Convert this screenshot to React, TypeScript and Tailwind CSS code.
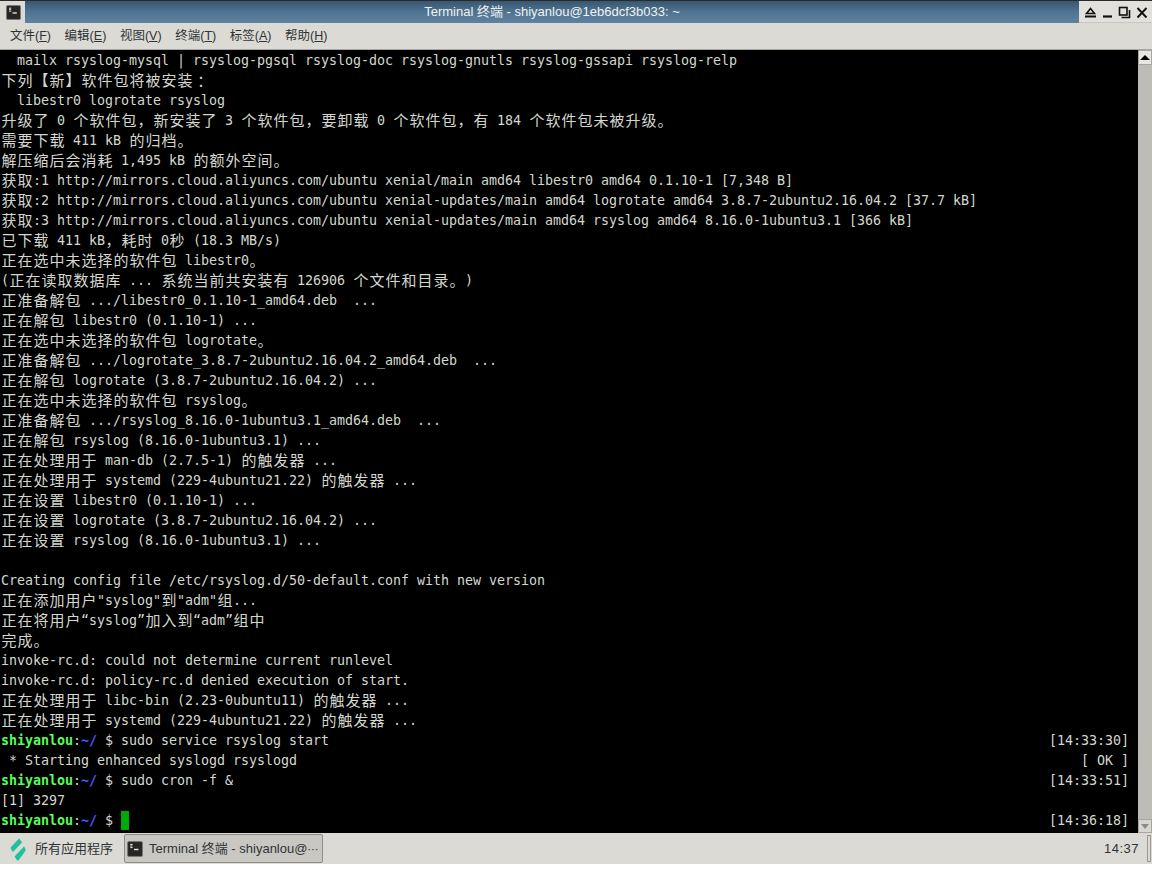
const MONO = "font-['DejaVu_Sans_Mono','Noto_Sans_CJK_SC',monospace]";

type Seg = { t: string; c?: string };
type Line = { segs: Seg[]; time?: string };

const prompt = (cmd: string, time: string, cursor = false): Line => ({
  segs: [
    { t: "shiyanlou", c: "font-bold text-[#55ff55]" },
    { t: ":" },
    { t: "~/", c: "font-bold text-[#5555ff]" },
    { t: " $ " + cmd },
    ...(cursor ? [{ t: "\u0000" }] : []),
  ],
  time,
});

const plain = (t: string, time?: string): Line => ({ segs: [{ t }], time });

const lines: Line[] = [
  plain("  mailx rsyslog-mysql | rsyslog-pgsql rsyslog-doc rsyslog-gnutls rsyslog-gssapi rsyslog-relp"),
  plain("下列【新】软件包将被安装："),
  plain("  libestr0 logrotate rsyslog"),
  plain("升级了 0 个软件包，新安装了 3 个软件包，要卸载 0 个软件包，有 184 个软件包未被升级。"),
  plain("需要下载 411 kB 的归档。"),
  plain("解压缩后会消耗 1,495 kB 的额外空间。"),
  plain("获取:1 http://mirrors.cloud.aliyuncs.com/ubuntu xenial/main amd64 libestr0 amd64 0.1.10-1 [7,348 B]"),
  plain("获取:2 http://mirrors.cloud.aliyuncs.com/ubuntu xenial-updates/main amd64 logrotate amd64 3.8.7-2ubuntu2.16.04.2 [37.7 kB]"),
  plain("获取:3 http://mirrors.cloud.aliyuncs.com/ubuntu xenial-updates/main amd64 rsyslog amd64 8.16.0-1ubuntu3.1 [366 kB]"),
  plain("已下载 411 kB，耗时 0秒 (18.3 MB/s)"),
  plain("正在选中未选择的软件包 libestr0。"),
  plain("(正在读取数据库 ... 系统当前共安装有 126906 个文件和目录。)"),
  plain("正准备解包 .../libestr0_0.1.10-1_amd64.deb  ..."),
  plain("正在解包 libestr0 (0.1.10-1) ..."),
  plain("正在选中未选择的软件包 logrotate。"),
  plain("正准备解包 .../logrotate_3.8.7-2ubuntu2.16.04.2_amd64.deb  ..."),
  plain("正在解包 logrotate (3.8.7-2ubuntu2.16.04.2) ..."),
  plain("正在选中未选择的软件包 rsyslog。"),
  plain("正准备解包 .../rsyslog_8.16.0-1ubuntu3.1_amd64.deb  ..."),
  plain("正在解包 rsyslog (8.16.0-1ubuntu3.1) ..."),
  plain("正在处理用于 man-db (2.7.5-1) 的触发器 ..."),
  plain("正在处理用于 systemd (229-4ubuntu21.22) 的触发器 ..."),
  plain("正在设置 libestr0 (0.1.10-1) ..."),
  plain("正在设置 logrotate (3.8.7-2ubuntu2.16.04.2) ..."),
  plain("正在设置 rsyslog (8.16.0-1ubuntu3.1) ..."),
  plain(""),
  plain("Creating config file /etc/rsyslog.d/50-default.conf with new version"),
  plain('正在添加用户"syslog"到"adm"组...'),
  plain("正在将用户“syslog”加入到“adm”组中"),
  plain("完成。"),
  plain("invoke-rc.d: could not determine current runlevel"),
  plain("invoke-rc.d: policy-rc.d denied execution of start."),
  plain("正在处理用于 libc-bin (2.23-0ubuntu11) 的触发器 ..."),
  plain("正在处理用于 systemd (229-4ubuntu21.22) 的触发器 ..."),
  prompt("sudo service rsyslog start", "[14:33:30]"),
  plain(" * Starting enhanced syslogd rsyslogd", "[ OK ]"),
  prompt("sudo cron -f &", "[14:33:51]"),
  plain("[1] 3297"),
  prompt("", "[14:36:18]", true),
];

const isWide = (ch: string) => /[\u3000-\u30ff\u3400-\u9fff\uff00-\uffef]/.test(ch);

// every character sits on the terminal's 8px cell grid, CJK takes two cells
const Cells = ({ text, className }: { text: string; className?: string }) => (
  <>
    {Array.from(text).map((ch, i) =>
      ch === "\u0000" ? (
        <span key={i} className="inline-block h-[19px] w-2 bg-[#00aa00] align-top" />
      ) : (
        <span
          key={i}
          className={`inline-block h-5 overflow-visible whitespace-pre text-center align-top ${
            ch === "：" ? "w-4 text-[15px] font-['Noto_Sans_CJK_TC']" : isWide(ch) ? "w-4 text-[15px]" : "w-2"
          } ${className ?? ""}`}
        >
          {ch}
        </span>
      )
    )}
  </>
);

const TermIcon = ({ size }: { size: number }) => (
  <svg width={size} height={size} viewBox="0 0 16 16" className="shrink-0">
    <rect x="0.5" y="0.5" width="15" height="15" rx="1.5" fill="#2e2e2c" stroke="#77777a" />
    <rect x="1.5" y="1.5" width="13" height="13" fill="#262624" />
    <path d="M3.2 3.4h2.4M3.2 5h2.2M3.4 6.6h2.2" stroke="#eeeeec" strokeWidth="1" />
    <path d="M7 8.5h4.5" stroke="#eeeeec" strokeWidth="1.4" />
  </svg>
);

const menus = [
  ["文件", "F"],
  ["编辑", "E"],
  ["视图", "V"],
  ["终端", "T"],
  ["标签", "A"],
  ["帮助", "H"],
];

const UI_FONT = "font-['Liberation_Sans','Noto_Sans_CJK_SC',sans-serif]";

export default function App() {
  return (
    <div className={`flex h-[896px] w-[1152px] flex-col overflow-hidden bg-white ${UI_FONT}`}>
      {/* title bar */}
      <div className="flex h-[23px] shrink-0 border-t border-[#2a2a2a] bg-[#dcdad5]">
        <div className="flex w-[25px] shrink-0 items-center justify-center pl-[1px]">
          <TermIcon size={15} />
        </div>
        <div className="flex flex-1 items-center justify-center bg-gradient-to-b from-[#39566f] via-[#4f7492] to-[#5f829e] text-[13px] text-[#f0f3f5]">
          Terminal 终端 - shiyanlou@1eb6dcf3b033: ~
        </div>
        <div className="flex w-[73px] shrink-0 items-start border-b border-[#c9c7c2] bg-[#e2e0dc]">
          <svg width="73" height="21" viewBox="0 0 73 21">
            <path d="M7.5 12.5 L11.5 7.5 L15.5 12.5Z" fill="none" stroke="#111" strokeWidth="1.6" />
            <path d="M6 15.5h11" stroke="#111" strokeWidth="2" />
            <path d="M24 15.5h9" stroke="#111" strokeWidth="2.2" />
            <rect x="40.5" y="6.5" width="7.5" height="7.5" fill="none" stroke="#111" strokeWidth="1.6" />
            <path d="M50.5 9v7.5h-8" fill="none" stroke="#111" strokeWidth="1.6" />
            <path d="M58.5 7l9 9.5M67.5 7l-9 9.5" stroke="#111" strokeWidth="1.9" />
          </svg>
        </div>
      </div>

      {/* menu bar */}
      <div className="flex h-[27px] shrink-0 items-center gap-[13.6px] border-b border-[#a8a6a0] bg-[#dcdad5] pl-[10px] text-[12.5px] text-[#2e3436]">
        {menus.map(([label, key]) => (
          <span key={key}>
            {label}(<span className="underline">{key}</span>)
          </span>
        ))}
      </div>

      {/* terminal + scrollbar */}
      <div className="flex h-[783px] shrink-0 bg-black">
        <div className={`min-w-0 flex-1 pl-[1px] pt-[1px] text-[13.33px] leading-5 text-[#d3d7cf] ${MONO}`}>
          {lines.map((line, i) => (
            <div key={i} className="flex h-5 justify-between whitespace-pre pr-[9px]">
              <div>
                {line.segs.map((seg, j) => (
                  <Cells key={j} text={seg.t} className={seg.c} />
                ))}
              </div>
              {line.time && (
                <div>
                  <Cells text={line.time} />
                </div>
              )}
            </div>
          ))}
        </div>
        <div className="flex w-[14px] shrink-0 flex-col bg-[#bebcb7]">
          <div className="flex h-[15px] items-center justify-center border border-[#a8a6a0] bg-[#e8e6e2]">
            <div className="h-0 w-0 border-x-[5px] border-b-[5px] border-x-transparent border-b-black" />
          </div>
          <div className="flex-1" />
          <div className="flex h-[14px] items-center justify-center border border-[#a8a6a0] bg-[#d8d6d1]">
            <div className="h-0 w-0 border-x-[4px] border-t-[5px] border-x-transparent border-t-[#8a8a88]" />
          </div>
        </div>
      </div>

      {/* taskbar */}
      <div className="flex h-[31px] shrink-0 items-center bg-[#dcdad5] text-[13px] text-[#2e3436]">
        <svg width="17" height="24" viewBox="0 0 17 24" className="ml-[10px] shrink-0">
          <path d="M9 1.5 Q11 3.5 12 5.5 L3 15 Q0 12 1 10 Z" fill="#1fc29a" />
          <path d="M14 9.5 Q16.5 12.5 15 14.5 L8 24 Q5.5 21.5 4.5 19.5 Z" fill="#1fc29a" />
        </svg>
        <span className="ml-[8px] w-[89px] shrink-0">所有应用程序</span>
        <div className="flex h-[29px] w-[199px] shrink-0 items-center gap-[6px] rounded-[2px] border border-[#8f8d88] bg-[#c9c7c2] pl-[2px]">
          <TermIcon size={16} />
          <span>
            Terminal 终端 - shiyanlou@<span className="font-['DejaVu_Sans'] text-[11px]">⋯</span>
          </span>
        </div>
        <div className="flex-1" />
        <span className="mr-[8px] tracking-[0.5px]">14:37</span>
        <div className="mr-[1px] h-[27px] w-[4px] border border-[#9a9892]" />
      </div>
    </div>
  );
}
